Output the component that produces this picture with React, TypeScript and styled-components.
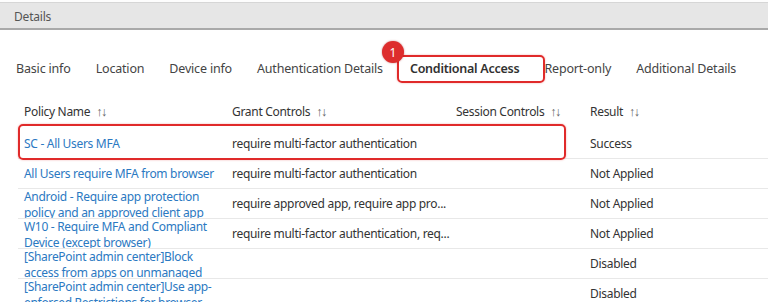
import styled, { createGlobalStyle } from "styled-components";

const GlobalStyle = createGlobalStyle`
  body {
    margin: 0;
    background: #fff;
    font-family: "Noto Sans", "Open Sans", sans-serif;
    color: #323130;
  }
`;

const Page = styled.div`
  width: 768px;
  height: 302px;
  overflow: hidden;
  position: relative;
  background: #fff;
`;

const TopEdge = styled.div`
  height: 2px;
  background: #fdfdfd;
  border-bottom: 1px solid #d6d6d6;
`;

const TitleBar = styled.div`
  height: 27px;
  background: #e6e6e6;
  border-bottom: 2px solid #a9a9a9;
  display: flex;
  align-items: center;
  padding: 1px 0 0 14px;
  box-sizing: border-box;
  font-size: 12px;
  letter-spacing: -0.2px;
  color: #555;
`;

const Tabs = styled.div`
  display: flex;
  align-items: center;
  gap: 25px;
  padding: 23px 0 0 16px;
  height: 30px;
  white-space: nowrap;
`;

const Tab = styled.div<{ $active?: boolean }>`
  position: relative;
  flex-shrink: 0;
  font-size: 12.5px;
  letter-spacing: ${(p) => (p.$active ? "-0.25px" : "-0.18px")};
  font-weight: ${(p) => (p.$active ? 600 : 400)};
  color: ${(p) => (p.$active ? "#323130" : "#444")};
  padding: 6px 0;

  ${(p) =>
    p.$active &&
    `
    margin-left: 2px;
    &::after {
      content: "";
      position: absolute;
      left: 0;
      right: 0;
      bottom: 0;
      height: 2px;
      background: #4b56a6;
    }
  `}
`;

const Callout = styled.div`
  position: absolute;
  border: 2px solid #e02a2a;
  border-radius: 5px;
  box-shadow: 0 0 2px rgba(224, 42, 42, 0.4);
  pointer-events: none;
`;

const Badge = styled.div`
  position: absolute;
  width: 22px;
  height: 22px;
  border-radius: 50%;
  background: #dd2d2d;
  color: #fff;
  font-size: 12px;
  display: flex;
  align-items: center;
  justify-content: center;
  box-shadow: 0 0 2px rgba(150, 0, 0, 0.5);
`;

const Table = styled.div`
  margin: 13px 0 0 18px;
`;

const Row = styled.div<{ $header?: boolean }>`
  display: grid;
  grid-template-columns: 208px 224px 134px 1fr;
  height: ${(p) => (p.$header ? "33px" : "29px")};
  border-bottom: ${(p) => (p.$header ? "none" : "1px solid #e8e8e8")};
  font-size: 12px;
  letter-spacing: -0.3px;
`;

const HeadCell = styled.div`
  display: flex;
  align-items: flex-start;
  padding: 7px 0 0 6px;
  font-size: 12px;
  color: #333;
`;

const Sort = styled.span`
  margin-left: 6px;
  font-size: 12.5px;
  letter-spacing: -1.5px;
  color: #666;
`;

const Cell = styled.div<{ $link?: boolean; $wrap?: boolean }>`
  padding-left: 6px;
  overflow: hidden;
  color: ${(p) => (p.$link ? "#2b79c2" : "#333")};
  ${(p) =>
    p.$wrap
      ? `line-height: 16px; padding-top: 0;`
      : `display: flex; align-items: center; white-space: nowrap;`}
`;

const rows = [
  { name: "SC - All Users MFA", grant: "require multi-factor authentication", result: "Success" },
  { name: "All Users require MFA from browser", grant: "require multi-factor authentication", result: "Not Applied" },
  { name: "Android - Require app protection policy and an approved client app", grant: "require approved app, require app pro...", result: "Not Applied", wrap: true },
  { name: "W10 - Require MFA and Compliant Device (except browser)", grant: "require multi-factor authentication, req...", result: "Not Applied", wrap: true },
  { name: "[SharePoint admin center]Block access from apps on unmanaged devices", grant: "", result: "Disabled", wrap: true },
  { name: "[SharePoint admin center]Use app-enforced Restrictions for browser access", grant: "", result: "Disabled", wrap: true },
];

const tabs = [
  "Basic info",
  "Location",
  "Device info",
  "Authentication Details",
  "Conditional Access",
  "Report-only",
  "Additional Details",
];

export default function App() {
  return (
    <Page>
      <GlobalStyle />
      <TopEdge />
      <TitleBar>Details</TitleBar>
      <Tabs>
        {tabs.map((t) => (
          <Tab key={t} $active={t === "Conditional Access"}>
            {t}
          </Tab>
        ))}
      </Tabs>
      <Table>
        <Row $header>
          <HeadCell>Policy Name<Sort>↑↓</Sort></HeadCell>
          <HeadCell>Grant Controls<Sort>↑↓</Sort></HeadCell>
          <HeadCell>Session Controls<Sort>↑↓</Sort></HeadCell>
          <HeadCell>Result<Sort>↑↓</Sort></HeadCell>
        </Row>
        {rows.map((r) => (
          <Row key={r.name}>
            <Cell $link $wrap={r.wrap}>{r.name}</Cell>
            <Cell>{r.grant}</Cell>
            <Cell />
            <Cell>{r.result}</Cell>
          </Row>
        ))}
      </Table>
      <Callout style={{ left: 397, top: 55, width: 144, height: 24 }} />
      <Badge style={{ left: 382, top: 41 }}>1</Badge>
      <Callout style={{ left: 18, top: 124, width: 544, height: 32 }} />
    </Page>
  );
}
